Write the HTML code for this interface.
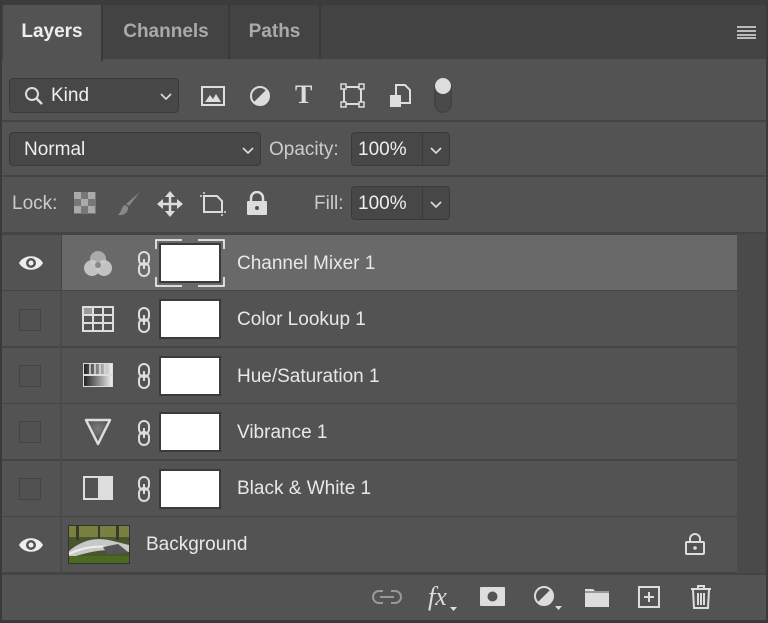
<!DOCTYPE html><html><head><style>
*{margin:0;padding:0;box-sizing:border-box}
body{width:768px;height:623px;background:#3c3c3c;font-family:"Liberation Sans",sans-serif;color:#ddd;position:relative;overflow:hidden}
.a{position:absolute}
.tab{position:absolute;top:5px;height:54px;line-height:54px;font-weight:bold;font-size:19px;color:#aaa;text-align:center;border-right:2px solid #3a3a3a}
.box{position:absolute;background:#474747;border:1px solid #3a3a3a;border-radius:4px;color:#eee;font-size:19px}
.row{position:absolute;left:2px;width:735px;height:55px;background:#535353}
.lbl{position:absolute;font-size:19px;color:#e8e8e8}
.cb{position:absolute;left:19px;width:22px;height:22px;border:1px solid #444;background:#515151}
.mask{position:absolute;left:159px;width:62px;height:40px;background:#fff;border:2px solid #3a3a3a}
svg{position:absolute}
.chev{position:absolute;width:12px;height:8px}
</style></head><body>
<div class="a" style="left:2px;top:5px;width:764px;height:54px;background:#434343"></div>
<div class="a" style="left:2px;top:59px;width:764px;height:564px;background:#535353"></div>
<div class="tab" style="left:3px;width:100px;background:#535353;color:#eee;height:56px">Layers</div>
<div class="tab" style="left:104px;width:126px">Channels</div>
<div class="tab" style="left:230px;width:91px">Paths</div>
<svg style="left:736px;top:25px" width="22" height="14"><g stroke="#bbb" stroke-width="2"><line x1="1" y1="2" x2="20" y2="2"/><line x1="1" y1="6" x2="20" y2="6"/><line x1="1" y1="10" x2="20" y2="10"/><line x1="1" y1="13" x2="20" y2="13"/></g></svg>
<div class="a" style="left:2px;top:120px;width:764px;height:2px;background:#444"></div>
<div class="a" style="left:2px;top:175px;width:764px;height:2px;background:#444"></div>
<div class="a" style="left:2px;top:232px;width:764px;height:2px;background:#444"></div>
<div class="box" style="left:9px;top:78px;width:170px;height:35px"><svg style="left:14px;top:7px" width="22" height="22"><circle cx="8" cy="8" r="6" fill="none" stroke="#ddd" stroke-width="2"/><line x1="12" y1="12" x2="18" y2="18" stroke="#ddd" stroke-width="2.5"/></svg><span class="a" style="left:41px;top:6px">Kind</span><svg class="chev" style="left:150px;top:14px" width="12" height="8"><path d="M1 1 L6 6 L11 1" fill="none" stroke="#ddd" stroke-width="1.6"/></svg></div>
<svg style="left:200px;top:85px" width="28" height="22"><rect x="2" y="2" width="22" height="18" fill="none" stroke="#ddd" stroke-width="2"/><path d="M5 17 L10 10 L13 14 L16 9 L21 17Z" fill="#ddd"/></svg>
<svg style="left:248px;top:84px" width="24" height="24"><circle cx="12" cy="12" r="9" fill="none" stroke="#ddd" stroke-width="2"/><path d="M18.4 5.6A9 9 0 0 1 5.6 18.4Z" fill="#ddd"/></svg>
<div class="a" style="left:295px;top:80px;font-family:'Liberation Serif',serif;font-weight:bold;font-size:26px;color:#ddd">T</div>
<svg style="left:340px;top:83px" width="26" height="26"><rect x="4" y="4" width="17" height="17" fill="none" stroke="#ddd" stroke-width="2"/><g fill="#535353" stroke="#ddd" stroke-width="1.5"><rect x="1" y="1" width="5" height="5"/><rect x="19" y="1" width="5" height="5"/><rect x="1" y="19" width="5" height="5"/><rect x="19" y="19" width="5" height="5"/></g></svg>
<svg style="left:389px;top:83px" width="24" height="26"><path d="M7 2 H16 L21 7 V20 H7Z" fill="none" stroke="#ddd" stroke-width="2"/><rect x="1" y="12" width="11" height="12" fill="#ddd"/></svg>
<div class="a" style="left:434px;top:78px;width:18px;height:35px;border:2px solid #444;border-radius:9px;background:#4a4a4a"></div>
<div class="a" style="left:435px;top:78px;width:16px;height:16px;border-radius:8px;background:#ddd"></div>
<div class="box" style="left:9px;top:132px;width:252px;height:34px"><span class="a" style="left:14px;top:6px">Normal</span><svg class="chev" style="left:232px;top:14px" width="12" height="8"><path d="M1 1 L6 6 L11 1" fill="none" stroke="#ddd" stroke-width="1.6"/></svg></div>
<div class="lbl" style="left:269px;top:139px;color:#ccc">Opacity:</div>
<div class="box" style="left:351px;top:132px;width:99px;height:34px"><span class="a" style="left:6px;top:6px">100%</span><div class="a" style="left:70px;top:0;width:1px;height:32px;background:#3a3a3a"></div><svg class="chev" style="left:78px;top:14px" width="12" height="8"><path d="M1 1 L6 6 L11 1" fill="none" stroke="#ddd" stroke-width="1.6"/></svg></div>
<div class="lbl" style="left:12px;top:193px;color:#ccc">Lock:</div>
<svg style="left:74px;top:192px" width="22" height="22"><rect width="22" height="22" fill="#777"/><g fill="#aaa"><rect x="0" y="0" width="7" height="7"/><rect x="14" y="0" width="7" height="7"/><rect x="7" y="7" width="7" height="7"/><rect x="0" y="14" width="7" height="7"/><rect x="14" y="14" width="7" height="7"/></g></svg>
<svg style="left:116px;top:190px" width="28" height="28"><path d="M24 2 L13 16 L10 14 Z" fill="#888"/><path d="M9 15 C5 16 6 22 2 25 C8 26 13 22 12 17Z" fill="#888"/></svg>
<svg style="left:157px;top:191px" width="26" height="26"><g stroke="#ddd" stroke-width="2.5"><line x1="13" y1="2" x2="13" y2="24"/><line x1="2" y1="13" x2="24" y2="13"/></g><g fill="#ddd"><path d="M13 0 L18 6 H8Z"/><path d="M13 26 L18 20 H8Z"/><path d="M0 13 L6 8 V18Z"/><path d="M26 13 L20 8 V18Z"/></g></svg>
<svg style="left:199px;top:191px" width="28" height="26"><path d="M5 5 H18 L23 10 V21 H5Z" fill="none" stroke="#ddd" stroke-width="2"/><g stroke="#ddd" stroke-width="1.5"><line x1="1" y1="5" x2="3" y2="5"/><line x1="5" y1="1" x2="5" y2="3"/><line x1="25" y1="21" x2="27" y2="21"/><line x1="23" y1="23" x2="23" y2="25"/></g></svg>
<svg style="left:246px;top:191px" width="22" height="24"><path d="M5 11 V7 A6 6 0 0 1 17 7 V11" fill="none" stroke="#ddd" stroke-width="2.5"/><rect x="1" y="10" width="20" height="14" rx="1" fill="#ddd"/><circle cx="11" cy="17" r="2" fill="#535353"/></svg>
<div class="lbl" style="left:314px;top:193px;color:#ccc">Fill:</div>
<div class="box" style="left:351px;top:186px;width:99px;height:34px"><span class="a" style="left:6px;top:6px">100%</span><div class="a" style="left:70px;top:0;width:1px;height:32px;background:#3a3a3a"></div><svg class="chev" style="left:78px;top:14px" width="12" height="8"><path d="M1 1 L6 6 L11 1" fill="none" stroke="#ddd" stroke-width="1.6"/></svg></div>
<div class="a" style="left:2px;top:234px;width:764px;height:339px;background:#444"></div>
<div class="a" style="left:737px;top:234px;width:29px;height:339px;background:#4a4a4a"></div>
<div class="row" style="top:235px;background:#535353;width:59px"></div>
<div class="row" style="top:235px;left:62px;width:675px;background:#696969"></div>
<div class="row" style="top:291px"></div>
<div class="row" style="top:348px"></div>
<div class="row" style="top:404px"></div>
<div class="row" style="top:461px"></div>
<div class="row" style="top:517px"></div>
<div class="a" style="left:60px;top:291px;width:2px;height:282px;background:#4a4a4a"></div>
<svg style="left:18px;top:254px" width="26" height="18"><path d="M1 9 C6 0 20 0 25 9 C20 18 6 18 1 9Z" fill="#eee"/><circle cx="13" cy="9" r="5" fill="#535353"/><circle cx="13" cy="9" r="2.5" fill="#eee"/></svg>
<svg style="left:18px;top:536px" width="26" height="18"><path d="M1 9 C6 0 20 0 25 9 C20 18 6 18 1 9Z" fill="#eee"/><circle cx="13" cy="9" r="5" fill="#535353"/><circle cx="13" cy="9" r="2.5" fill="#eee"/></svg>
<div class="cb" style="top:309px"></div><div class="cb" style="top:365px"></div><div class="cb" style="top:421px"></div><div class="cb" style="top:478px"></div>
<svg style="left:82px;top:248px" width="32" height="32"><circle cx="16" cy="11" r="8" fill="#aaa"/><circle cx="10" cy="20" r="8" fill="#ccc" opacity=".9"/><circle cx="22" cy="20" r="8" fill="#ccc" opacity=".9"/><circle cx="16" cy="17" r="3" fill="#888"/></svg>
<svg style="left:82px;top:306px" width="32" height="26"><rect x="1" y="1" width="30" height="24" fill="none" stroke="#ddd" stroke-width="2"/><g stroke="#ddd" stroke-width="2"><line x1="1" y1="9" x2="31" y2="9"/><line x1="1" y1="17" x2="31" y2="17"/><line x1="11" y1="1" x2="11" y2="25"/><line x1="21" y1="1" x2="21" y2="25"/></g><rect x="2" y="2" width="8" height="6" fill="#999"/></svg>
<svg style="left:82px;top:362px" width="32" height="26"><defs><linearGradient id="g"><stop offset="0" stop-color="#222"/><stop offset="1" stop-color="#eee"/></linearGradient></defs><rect x="1" y="1" width="30" height="24" fill="#ddd"/><rect x="2" y="2" width="28" height="10" fill="url(#g)"/><rect x="2" y="14" width="28" height="10" fill="url(#g)"/><g stroke="#ddd" stroke-width="1.5"><line x1="8" y1="2" x2="8" y2="12"/><line x1="13" y1="2" x2="13" y2="12"/><line x1="18" y1="2" x2="18" y2="12"/><line x1="23" y1="2" x2="23" y2="12"/></g></svg>
<svg style="left:84px;top:418px" width="30" height="28"><defs><radialGradient id="r2" cx=".5" cy=".35" r=".5"><stop offset="0" stop-color="#7a7a7a"/><stop offset="1" stop-color="#535353"/></radialGradient></defs><path d="M2 2 H26 L14 26Z" fill="url(#r2)" stroke="#ddd" stroke-width="2.5" stroke-linejoin="round"/></svg>
<svg style="left:82px;top:475px" width="32" height="26"><rect x="1" y="1" width="30" height="24" fill="#ddd"/><rect x="3" y="3" width="13" height="20" fill="#535353"/></svg>
<svg style="left:136px;top:251px" width="16" height="26"><g fill="none" stroke="#ddd" stroke-width="2"><rect x="3" y="1" width="10" height="13" rx="5"/><rect x="3" y="12" width="10" height="13" rx="5"/><line x1="8" y1="8" x2="8" y2="18"/></g></svg>
<svg style="left:136px;top:307px" width="16" height="26"><g fill="none" stroke="#ddd" stroke-width="2"><rect x="3" y="1" width="10" height="13" rx="5"/><rect x="3" y="12" width="10" height="13" rx="5"/><line x1="8" y1="8" x2="8" y2="18"/></g></svg>
<svg style="left:136px;top:363px" width="16" height="26"><g fill="none" stroke="#ddd" stroke-width="2"><rect x="3" y="1" width="10" height="13" rx="5"/><rect x="3" y="12" width="10" height="13" rx="5"/><line x1="8" y1="8" x2="8" y2="18"/></g></svg>
<svg style="left:136px;top:420px" width="16" height="26"><g fill="none" stroke="#ddd" stroke-width="2"><rect x="3" y="1" width="10" height="13" rx="5"/><rect x="3" y="12" width="10" height="13" rx="5"/><line x1="8" y1="8" x2="8" y2="18"/></g></svg>
<svg style="left:136px;top:476px" width="16" height="26"><g fill="none" stroke="#ddd" stroke-width="2"><rect x="3" y="1" width="10" height="13" rx="5"/><rect x="3" y="12" width="10" height="13" rx="5"/><line x1="8" y1="8" x2="8" y2="18"/></g></svg>
<div class="mask" style="top:243px;width:62px"></div>
<svg style="left:155px;top:239px" width="70" height="48"><g fill="none" stroke="#fff" stroke-width="1.5"><path d="M1 10 V1 H27"/><path d="M43 1 H69 V10"/><path d="M1 38 V47 H27"/><path d="M43 47 H69 V38"/></g></svg>
<div class="mask" style="top:299px"></div><div class="mask" style="top:356px"></div><div class="mask" style="top:412px"></div><div class="mask" style="top:469px"></div>
<div class="lbl" style="left:237px;top:253px">Channel Mixer 1</div>
<div class="lbl" style="left:237px;top:309px">Color Lookup 1</div>
<div class="lbl" style="left:237px;top:366px">Hue/Saturation 1</div>
<div class="lbl" style="left:237px;top:422px">Vibrance 1</div>
<div class="lbl" style="left:237px;top:478px">Black &amp; White 1</div>
<svg style="left:68px;top:525px" width="62" height="39"><rect width="62" height="39" fill="#333"/><rect x="1" y="1" width="60" height="37" fill="#4a5530"/><rect x="1" y="1" width="60" height="11" fill="#7a8040"/><g fill="#3a3a2a"><rect x="8" y="1" width="3" height="14"/><rect x="30" y="1" width="2" height="12"/><rect x="48" y="1" width="3" height="14"/></g><path d="M1 26 C15 14 30 12 45 16 L61 20 V27 C40 22 20 27 1 33Z" fill="#c8c8c8"/><path d="M1 29 C15 22 30 20 50 23" stroke="#eee" stroke-width="2" fill="none"/><rect x="1" y="31" width="60" height="7" fill="#4a6a20"/><path d="M35 22 L50 19 L60 27 L40 30Z" fill="#555"/></svg>
<div class="lbl" style="left:146px;top:534px">Background</div>
<svg style="left:684px;top:532px" width="22" height="24"><path d="M6 10 V7 A5 5 0 0 1 16 7 V10" fill="none" stroke="#ddd" stroke-width="2"/><rect x="2" y="10" width="18" height="12" rx="1" fill="none" stroke="#ddd" stroke-width="2"/><circle cx="11" cy="16" r="1.8" fill="#ddd"/></svg>
<div class="a" style="left:2px;top:573px;width:764px;height:2px;background:#444"></div>
<svg style="left:372px;top:589px" width="30" height="16"><g fill="none" stroke="#999" stroke-width="2"><path d="M11 2 H7 A6 6 0 0 0 7 14 H11"/><path d="M19 2 H23 A6 6 0 0 1 23 14 H19"/><line x1="8" y1="8" x2="22" y2="8"/></g></svg>
<div class="a" style="left:428px;top:582px;font-family:'Liberation Serif',serif;font-style:italic;font-size:26px;color:#ddd">fx</div>
<svg style="left:450px;top:606px" width="8" height="6"><path d="M0 1 H7 L3.5 5Z" fill="#ddd"/></svg>
<svg style="left:480px;top:587px" width="26" height="20"><rect x="0" y="0" width="25" height="19" rx="1" fill="#ddd"/><circle cx="12.5" cy="9.5" r="5" fill="#535353"/></svg>
<svg style="left:533px;top:585px" width="30" height="30"><circle cx="11" cy="11" r="9" fill="none" stroke="#ddd" stroke-width="2"/><path d="M17.4 4.6A9 9 0 0 1 4.6 17.4Z" fill="#ddd"/><path d="M22 21 H29 L25.5 25Z" fill="#ddd"/></svg>
<svg style="left:584px;top:586px" width="26" height="22"><path d="M1 3 H9 L11 5 H25 V21 H1Z" fill="#ddd"/><line x1="1" y1="6" x2="25" y2="6" stroke="#535353" stroke-width="1"/></svg>
<svg style="left:638px;top:586px" width="22" height="22"><rect x="1" y="1" width="20" height="20" fill="none" stroke="#ddd" stroke-width="2"/><g stroke="#ddd" stroke-width="2"><line x1="11" y1="6" x2="11" y2="16"/><line x1="6" y1="11" x2="16" y2="11"/></g></svg>
<svg style="left:690px;top:585px" width="22" height="24"><g fill="none" stroke="#ddd" stroke-width="2"><line x1="1" y1="4" x2="21" y2="4"/><path d="M8 4 V1 H14 V4"/><path d="M3 5 L4 23 H18 L19 5"/><line x1="8" y1="8" x2="8" y2="20"/><line x1="11" y1="8" x2="11" y2="20"/><line x1="14" y1="8" x2="14" y2="20"/></g></svg>
<div class="a" style="left:766px;top:0;width:2px;height:623px;background:#3a3a3a"></div>
<div class="a" style="left:0;top:0;width:2px;height:623px;background:#3a3a3a"></div>
<div class="a" style="left:0;top:620px;width:768px;height:3px;background:#3a3a3a"></div>
</body></html>
